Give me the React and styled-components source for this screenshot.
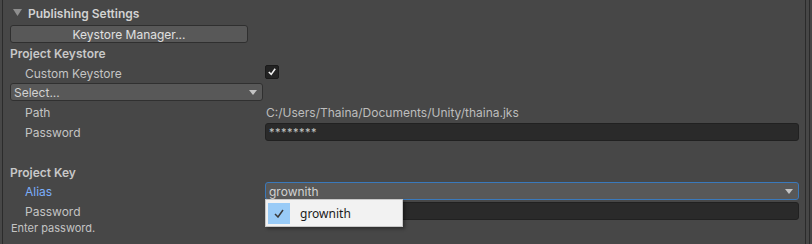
import React from "react";
import styled, { createGlobalStyle } from "styled-components";

const Global = createGlobalStyle`
  html, body { margin: 0; padding: 0; background: #474747; }
  body { font-family: Inter, "Noto Sans", sans-serif; font-size: 12px; color: #c4c4c4; }
  * { box-sizing: border-box; }
`;

const Window = styled.div`
  display: flex;
  width: 812px;
  height: 244px;
  background: #474747;
  overflow: hidden;
`;

const Panel = styled.div`
  margin-left: 2px;
  width: 804px;
  border-left: 1px solid #2b2b2b;
  border-right: 1px solid #2b2b2b;
  padding: 3px 6px 0 7px;
  display: flex;
  flex-direction: column;
`;

const Strip = styled.div`
  margin-left: 3px;
  width: 3px;
  border-left: 1px solid #2b2b2b;
`;

const Foldout = styled.div`
  height: 20px;
  display: flex;
  align-items: center;
  padding-left: 3px;
  gap: 6px;
  font-weight: 600;
  color: #d2d2d2;
`;

const Heading = styled.div`
  height: ${(p) => p.$h || 20}px;
  margin-top: ${(p) => p.$mt || 0}px;
  display: flex;
  align-items: center;
  font-weight: 600;
  color: #c8c8c8;
`;

const Button = styled.div`
  margin-top: 2px;
  width: 238px;
  height: 18px;
  background: #585858;
  border: 1px solid #2f2f2f;
  border-radius: 3px;
  display: flex;
  align-items: center;
  justify-content: center;
  color: #e0e0e0;
`;

const Row = styled.div`
  height: ${(p) => p.$h || 20}px;
  margin-top: ${(p) => p.$mt || 0}px;
  display: flex;
  align-items: center;
`;

const Label = styled.div`
  width: 255px;
  flex: none;
  padding-left: 15px;
  color: ${(p) => (p.$focus ? "#7baefa" : "#c4c4c4")};
`;

const Value = styled.div`
  flex: 1;
  display: flex;
  align-items: center;
  position: relative;
  height: 100%;
`;

const Checkbox = styled.div`
  width: 14px;
  height: 14px;
  margin-top: -2px;
  background: #232323;
  border: 1px solid #1a1a1a;
  border-radius: 2px;
  display: flex;
  align-items: center;
  justify-content: center;
`;

const Dropdown = styled.div`
  width: ${(p) => (p.$w ? p.$w + "px" : "100%")};
  height: 18px;
  background: #585858;
  border: 1px solid ${(p) => (p.$focus ? "#3a79bb" : "#303030")};
  border-radius: 3px;
  display: flex;
  align-items: center;
  justify-content: space-between;
  padding: 0 5px 0 3px;
  color: #d2d2d2;
`;

const TextField = styled.div`
  width: 100%;
  height: 18px;
  background: #2a2a2a;
  border: 1px solid #212121;
  border-radius: 3px;
  display: flex;
  align-items: center;
  padding-left: 3px;
  color: #c4c4c4;
  font-size: 11px;
  letter-spacing: 0.5px;
`;

const PathText = styled.div`
  padding-left: 1px;
  color: #bdbdbd;
`;

const Hint = styled.div`
  height: 16px;
  display: flex;
  align-items: center;
  padding-left: 1px;
  font-size: 11px;
  color: #c4c4c4;
`;

const Popup = styled.div`
  position: absolute;
  left: 0;
  top: -3px;
  width: 138px;
  height: 28px;
  background: #f2f2f2;
  border: 1px solid #c8c8c8;
  box-shadow: 2px 2px 3px rgba(0, 0, 0, 0.35);
  display: flex;
  align-items: center;
  padding-left: 2px;
  gap: 10px;
  z-index: 2;
`;

const CheckTile = styled.div`
  width: 22px;
  height: 21px;
  background: #99cbf7;
  display: flex;
  align-items: center;
  justify-content: center;
`;

const PopupText = styled.div`
  font-family: "Noto Sans", "Open Sans", sans-serif;
  font-size: 12px;
  color: #1a1a1a;
`;

const Arrow = ({ color = "#c4c4c4" }) => (
  <svg width="8" height="5" viewBox="0 0 8 5">
    <polygon points="0,0 8,0 4,5" fill={color} />
  </svg>
);

const FoldArrow = () => (
  <svg width="9" height="8" viewBox="0 0 9 8">
    <polygon points="0,0 9,0 4.5,7" fill="#8e8e8e" />
  </svg>
);

const Tick = ({ color, w = 2, size = 10 }) => (
  <svg width={size} height={size * 0.9} viewBox="0 0 10 9">
    <polyline points="1,5 4,8 9,1" fill="none" stroke={color} strokeWidth={w} />
  </svg>
);

export default function App() {
  return (
    <Window>
      <Global />
      <Panel>
        <Foldout>
          <FoldArrow />
          <span>Publishing Settings</span>
        </Foldout>
        <Button>Keystore Manager...</Button>
        <Heading>Project Keystore</Heading>
        <Row>
          <Label>Custom Keystore</Label>
          <Value>
            <Checkbox>
              <Tick color="#f0f0f0" size={8} w={2} />
            </Checkbox>
          </Value>
        </Row>
        <Dropdown $w={253}>
          <span>Select...</span>
          <Arrow />
        </Dropdown>
        <Row $h={22}>
          <Label>Path</Label>
          <Value>
            <PathText>C:/Users/Thaina/Documents/Unity/thaina.jks</PathText>
          </Value>
        </Row>
        <Row $h={18}>
          <Label>Password</Label>
          <Value>
            <TextField>********</TextField>
          </Value>
        </Row>
        <Heading $h={19} $mt={22}>Project Key</Heading>
        <Row $h={18}>
          <Label $focus>Alias</Label>
          <Value>
            <Dropdown $focus>
              <span>grownith</span>
              <Arrow />
            </Dropdown>
          </Value>
        </Row>
        <Row $h={18} $mt={2}>
          <Label>Password</Label>
          <Value>
            <TextField />
            <Popup>
              <CheckTile>
                <Tick color="#3a3a3a" w={1.5} />
              </CheckTile>
              <PopupText>grownith</PopupText>
            </Popup>
          </Value>
        </Row>
        <Hint>Enter password.</Hint>
      </Panel>
      <Strip />
    </Window>
  );
}
